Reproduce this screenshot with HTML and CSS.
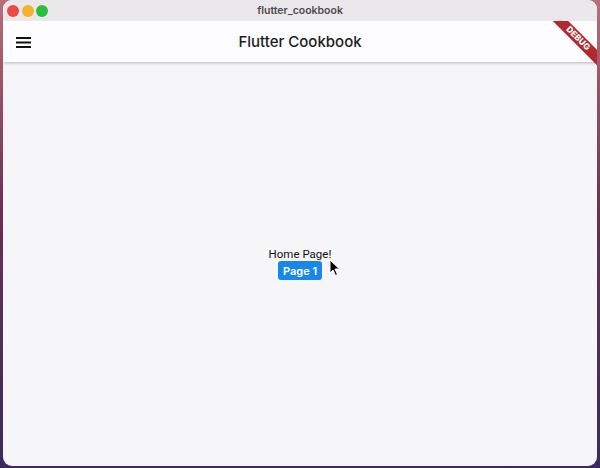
FILE: index.html
```html
<!DOCTYPE html>
<html lang="en">
<head>
  <meta charset="UTF-8">
  <meta name="viewport" content="width=device-width, initial-scale=1.0">
  <title>flutter_cookbook</title>
  <link rel="stylesheet" href="styles.css">
</head>
<body>

  <div class="window">
    <div class="titlebar">
      <div class="lights">
        <span class="light red"></span>
        <span class="light yellow"></span>
        <span class="light green"></span>
      </div>
      <div class="window-title">flutter_cookbook</div>
    </div>

    <div class="app">
      <header class="appbar">
        <button class="menu-btn" aria-label="Menu">
          <svg width="15" height="11" viewBox="0 0 15 11">
            <rect x="0" y="0" width="15" height="2" fill="#111"/>
            <rect x="0" y="4.5" width="15" height="2" fill="#111"/>
            <rect x="0" y="9" width="15" height="2" fill="#111"/>
          </svg>
        </button>
        <h1>Flutter Cookbook</h1>
      </header>

      <main class="content">
        <p class="home-text">Home Page!</p>
        <button class="page-btn">Page 1</button>
      </main>

      <div class="debug-banner"><span>DEBUG</span></div>
    </div>
  </div>

  <svg class="cursor" width="12" height="18" viewBox="0 0 12 18">
    <path d="M1 1 L1 14 L4 11 L6.5 16.5 L8.5 15.5 L6 10 L10.5 10 Z" fill="#000" stroke="#fff" stroke-width="1"/>
  </svg>

</body>
</html>
```

FILE: styles.css
```css
html, body {
  height: 100%;
}

body {
  margin: 0;
  padding: 0 3px 2px 3px;
  box-sizing: border-box;
  font-family: 'Roboto', 'Inter', sans-serif;
  background: linear-gradient(180deg, #b86e78 0%, #6a3050 45%, #3a2a60 100%);
  display: flex;
  flex-direction: column;
  position: relative;
}

.window {
  flex: 1;
  display: flex;
  flex-direction: column;
  border-radius: 9px;
  overflow: hidden;
  background-color: #f6f5f8;
}

.titlebar {
  height: 21px;
  background-color: #ebe8eb;
  display: flex;
  align-items: center;
  position: relative;
  flex-shrink: 0;
}

.lights {
  display: flex;
  gap: 2.5px;
  padding-left: 4px;
}

.light {
  width: 12px;
  height: 12px;
  border-radius: 50%;
}

.red { background-color: #ee4a45; }
.yellow { background-color: #f8b12e; }
.green { background-color: #29c03e; }

.window-title {
  position: absolute;
  left: 0;
  right: 0;
  text-align: center;
  font-family: 'Inter', sans-serif;
  font-size: 10.5px;
  font-weight: 600;
  color: #4c4a4c;
}

.app {
  flex: 1;
  display: flex;
  flex-direction: column;
  position: relative;
  overflow: hidden;
}

.appbar {
  height: 41px;
  background-color: #fdfcfe;
  display: flex;
  align-items: center;
  justify-content: center;
  position: relative;
  box-shadow: 0 1px 3px rgba(0, 0, 0, 0.25);
  z-index: 1;
}

.appbar h1 {
  margin: 0;
  font-family: 'Inter', sans-serif;
  font-size: 15px;
  font-weight: 500;
  color: #1c1b1f;
}

.menu-btn {
  position: absolute;
  left: 13px;
  top: 16px;
  padding: 0;
  border: none;
  background: none;
  display: flex;
}

.content {
  flex: 1;
  display: flex;
  flex-direction: column;
  align-items: center;
  justify-content: center;
  padding-bottom: 1px;
}

.home-text {
  margin: 0;
  font-size: 11.5px;
  color: #111;
  line-height: 14px;
}

.page-btn {
  height: 19px;
  padding: 0 5px;
  border: none;
  border-radius: 3px;
  background-color: #1887ea;
  color: #fff;
  font-family: 'Inter', sans-serif;
  font-size: 11px;
  font-weight: 600;
  cursor: pointer;
}

.debug-banner {
  position: absolute;
  top: 0;
  right: 0;
  width: 60px;
  height: 60px;
  overflow: hidden;
  z-index: 2;
}

.debug-banner span {
  position: absolute;
  top: 12px;
  left: 1px;
  width: 80px;
  height: 11px;
  line-height: 11px;
  transform: rotate(45deg);
  background-color: #b02a30;
  color: #fff;
  font-family: 'Inter', sans-serif;
  font-size: 8.5px;
  font-weight: 800;
  text-align: center;
}

.cursor {
  position: absolute;
  left: 329px;
  top: 259px;
}
```
